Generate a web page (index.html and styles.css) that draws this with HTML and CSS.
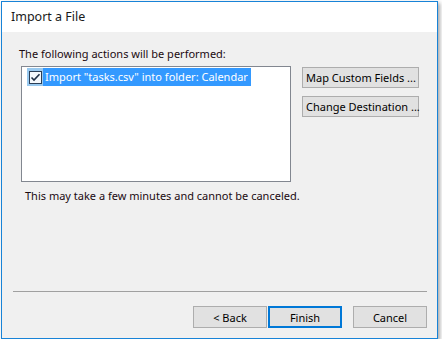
FILE: index.html
```html
<!DOCTYPE html>
<html lang="en">
<head>
  <meta charset="UTF-8">
  <title>Import a File</title>
  <link rel="stylesheet" href="styles.css">
</head>
<body>
  <div class="window">
    <div class="titlebar">Import a File</div>

    <div class="content">
      <p class="label">The following actions will be performed:</p>

      <div class="main">
        <div class="list">
          <div class="item">
            <span class="check">
              <svg width="13" height="13" viewBox="0 0 13 13">
                <rect x="0.5" y="0.5" width="12" height="12" fill="#f4f8fc" stroke="#2b3e55"/>
                <path d="M2.5 6.5 L5 9 L10.5 3.2" fill="none" stroke="#1f2f45" stroke-width="1.6"/>
              </svg>
            </span>
            <span class="item-text">Import "tasks.csv" into folder: Calendar</span>
          </div>
        </div>

        <div class="side">
          <button type="button" class="btn btn-wide">Map Custom Fields ...</button>
          <button type="button" class="btn btn-wide">Change Destination ...</button>
        </div>
      </div>

      <p class="note">This may take a few minutes and cannot be canceled.</p>

      <div class="sep"></div>

      <div class="footer">
        <button type="button" class="btn">&lt; Back</button>
        <button type="button" class="btn btn-default">Finish</button>
        <button type="button" class="btn btn-cancel">Cancel</button>
      </div>
    </div>
  </div>
</body>
</html>
```

FILE: styles.css
```css
body {
  margin: 0;
  background-color: #ffffff;
  font-family: "Noto Sans", "Open Sans", sans-serif;
  font-size: 11px;
  color: #000;
}

.window {
  width: 435px;
  height: 336px;
  margin: 1px 0 0 1px;
  border: 1px solid #1883d7;
  background-color: #f0f0f0;
  display: flex;
  flex-direction: column;
  box-shadow: 2px 2px 4px rgba(0, 0, 0, 0.35);
}

.titlebar {
  height: 30px;
  line-height: 30px;
  background: #fff;
  padding-left: 9px;
  font-size: 12.5px;
  color: #1a1a1a;
}

.content {
  flex: 1;
  display: flex;
  flex-direction: column;
}

.label {
  margin: 14px 0 0 17px;
  line-height: 16px;
  color: #1b0a10;
}

.main {
  display: flex;
  margin-top: 4px;
  margin-left: 19px;
}

.list {
  width: 268px;
  height: 113px;
  border: 1px solid #828790;
  background: #fff;
  padding-top: 1px;
}

.item {
  display: flex;
  align-items: center;
  height: 18px;
  margin-left: 5px;
}

.check {
  display: flex;
  align-items: center;
  justify-content: center;
  width: 16px;
  height: 18px;
  background: #99c9ef;
}

.check svg {
  display: block;
}

.item-text {
  background: #3399ff;
  color: #fff;
  height: 18px;
  line-height: 18px;
  padding: 0 3px 0 2px;
  white-space: nowrap;
}

.side {
  display: flex;
  flex-direction: column;
  gap: 8px;
  margin-left: 11px;
  padding-top: 1px;
}

.btn {
  font-family: inherit;
  font-size: 11px;
  color: #000;
  background: #e1e1e1;
  border: 1px solid #adadad;
  width: 74px;
  height: 22px;
  padding: 0;
  margin: 0;
  white-space: nowrap;
}

.btn-wide {
  width: 117px;
  height: 21px;
  text-align: left;
  padding-left: 3px;
}

.note {
  margin: 6px 0 0 23px;
  line-height: 16px;
  color: #1b0a10;
}

.sep {
  margin: auto 0 0 11px;
  width: 414px;
  border-top: 1px solid #a0a0a0;
}

.footer {
  display: flex;
  margin: 14px 0 10px 191px;
}

.btn-default {
  margin-left: 1px;
  border: 2px solid #0078d7;
}

.btn-cancel {
  margin-left: 11px;
}
```
